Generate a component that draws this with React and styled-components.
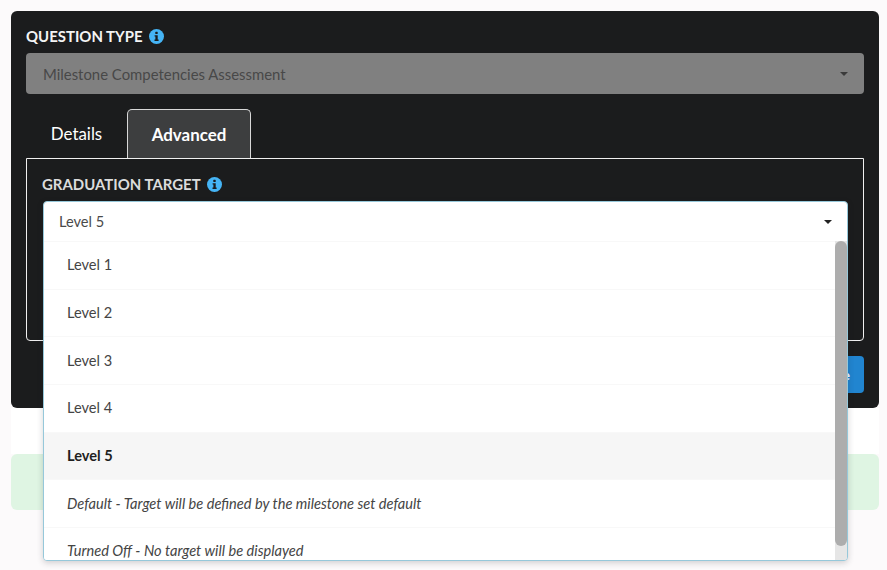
import React from 'react'
import styled, { createGlobalStyle } from 'styled-components'

const GlobalStyle = createGlobalStyle`
  html, body {
    margin: 0;
    height: 100%;
    overflow: hidden;
    background: #fcfafb;
    font-family: Lato, "Helvetica Neue", Arial, sans-serif;
  }
  * { box-sizing: border-box; }
`

const Page = styled.div`
  padding: 11px 8px 0 11px;
  display: flex;
  flex-direction: column;
`

const Panel = styled.div`
  background: #1b1c1d;
  border-radius: 6px;
  padding: 15px;
  height: 397px;
  display: flex;
  flex-direction: column;
`

const Label = styled.div`
  display: flex;
  align-items: center;
  gap: 6.5px;
  height: 20px;
  margin-bottom: ${p => p.$mb || 7}px;
  color: ${p => p.$dim ? '#dcdcdc' : '#f4f4f4'};
  font-size: 14.95px;
  font-weight: 700;
`

const InfoBadge = styled.svg`
  width: 15px;
  height: 15px;
  flex: none;
`

const Caret = styled.span`
  width: 0;
  height: 0;
  border-left: 4px solid transparent;
  border-right: 4px solid transparent;
  border-top: 4px solid ${p => p.$color};
`

const DisabledSelect = styled.div`
  height: 41px;
  border-radius: 4px;
  background: #808080;
  color: #484848;
  font-size: 14.9px;
  padding: 0 16px 0 17px;
  display: flex;
  align-items: center;
  justify-content: space-between;
`

const Tabs = styled.div`
  display: flex;
  margin-top: 15px;
  height: 49px;
`

const Tab = styled.div`
  width: ${p => p.$w}px;
  display: flex;
  align-items: center;
  justify-content: center;
  color: #fff;
  font-size: 16.9px;
  font-weight: ${p => p.$active ? 700 : 400};
  background: ${p => p.$active ? '#3d3e3f' : 'transparent'};
  border: ${p => p.$active ? '1px solid #d8d8d8' : 'none'};
  border-bottom: none;
  border-radius: 5px 5px 0 0;
`

const TabContent = styled.div`
  height: 183px;
  border: 1px solid #f0f0f0;
  border-radius: 0 0 4px 4px;
  padding: 15px;
  position: relative;
`

const Select = styled.div`
  position: absolute;
  top: 42px;
  left: 16px;
  width: 805px;
  height: 360px;
  background: #fff;
  border: 1px solid #96c8da;
  border-radius: 4px;
  box-shadow: 0 2px 6px rgba(34, 36, 38, 0.2);
  display: flex;
  flex-direction: column;
  overflow: hidden;
  z-index: 2;
`

const SelectValue = styled.div`
  height: 39px;
  flex: none;
  padding: 0 15px 0 15px;
  display: flex;
  align-items: center;
  justify-content: space-between;
  color: #4a4a4a;
  font-size: 14.6px;
`

const MenuBody = styled.div`
  flex: 1;
  min-height: 0;
  display: flex;
`

const Menu = styled.div`
  flex: 1;
  min-width: 0;
  overflow: hidden;
`

const ScrollTrack = styled.div`
  width: 12px;
  flex: none;
  background: #e6e6e6;
`

const ScrollThumb = styled.div`
  height: 305px;
  background: #adadad;
  border-radius: 6px;
`

const Item = styled.div`
  height: 47.7px;
  padding: 0 23px 1px;
  display: flex;
  align-items: center;
  border-top: 1px solid #f8f8f8;
  font-size: 14.6px;
  color: ${p => p.$selected ? '#1f1f1f' : '#444'};
  font-weight: ${p => p.$selected ? 700 : 400};
  font-style: ${p => p.$italic ? 'italic' : 'normal'};
  background: ${p => p.$selected ? '#f6f6f6' : '#fff'};
`

const Footer = styled.div`
  display: flex;
  justify-content: flex-end;
  margin-top: 15px;
`

const SaveButton = styled.button`
  width: 90px;
  height: 37px;
  border: none;
  border-radius: 4px;
  background: #2185d0;
  color: #fff;
  font: 700 14px Lato, sans-serif;
  padding: 0 14px 0 0;
  text-align: right;
`

const Spacer = styled.div`
  height: 46px;
  background: #fff;
`

const Notice = styled.div`
  height: 56px;
  background: #dff5e3;
  border-radius: 6px;
`

const levels = ['Level 1', 'Level 2', 'Level 3', 'Level 4', 'Level 5']

function Info() {
  return (
    <InfoBadge viewBox="0 0 15 15">
      <circle cx="7.5" cy="7.5" r="7.5" fill="#45b4f5" />
      <rect x="6.3" y="2.8" width="2.4" height="2.2" rx="0.6" fill="#1b1c1d" />
      <path d="M5.6 6.2h3.1v4.4h0.9v1.4H5.5v-1.4h0.9V7.6h-0.8z" fill="#1b1c1d" />
    </InfoBadge>
  )
}

export default function App() {
  return (
    <Page>
      <GlobalStyle />
      <Panel>
        <Label>QUESTION TYPE <Info /></Label>
        <DisabledSelect>
          Milestone Competencies Assessment
          <Caret $color="#3a3a3a" />
        </DisabledSelect>
        <Tabs>
          <Tab $w={101}>Details</Tab>
          <Tab $w={124} $active>Advanced</Tab>
        </Tabs>
        <TabContent>
          <Label $dim $mb={0}>GRADUATION TARGET <Info /></Label>
          <Select>
            <SelectValue>
              Level 5
              <Caret $color="#222" />
            </SelectValue>
            <MenuBody>
              <Menu>
                {levels.map(l => (
                  <Item key={l} $selected={l === 'Level 5'}>{l}</Item>
                ))}
                <Item $italic>Default - Target will be defined by the milestone set default</Item>
                <Item $italic>Turned Off - No target will be displayed</Item>
              </Menu>
              <ScrollTrack>
                <ScrollThumb />
              </ScrollTrack>
            </MenuBody>
          </Select>
        </TabContent>
        <Footer>
          <SaveButton>Save</SaveButton>
        </Footer>
      </Panel>
      <Spacer />
      <Notice />
    </Page>
  )
}
